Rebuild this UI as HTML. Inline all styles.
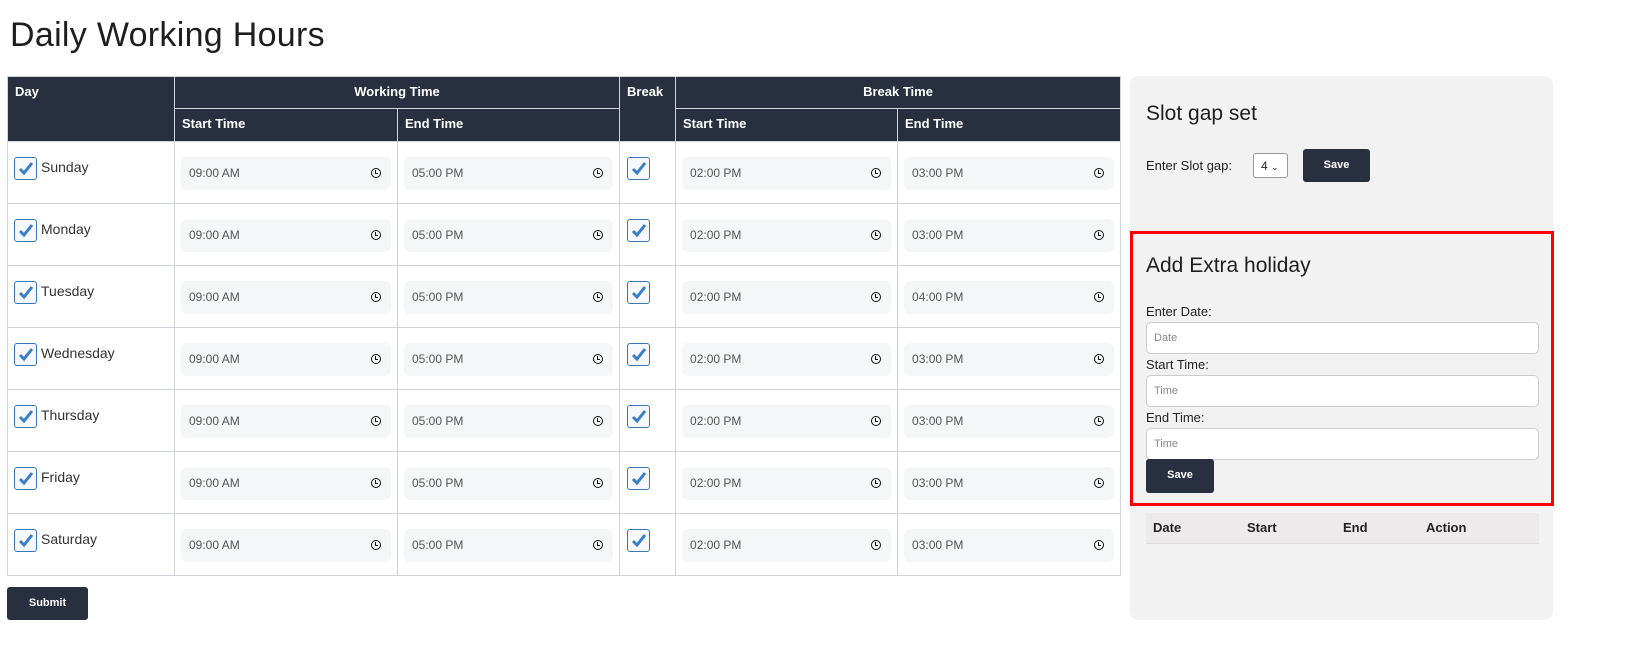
<!DOCTYPE html>
<html><head><meta charset="utf-8"><style>
*{box-sizing:border-box;margin:0;padding:0}
body{width:1633px;height:656px;background:#fff;font-family:"Liberation Sans",sans-serif;color:#222;position:relative;overflow:hidden}
h1{position:absolute;left:10px;top:16px;font-size:34px;font-weight:normal;color:#1e1e1e;letter-spacing:0.3px}
table{position:absolute;left:7px;top:76px;border-collapse:collapse;table-layout:fixed;width:1113px}
th{background:#282f3e;color:#fff;font-size:13px;font-weight:bold;border:1px solid #d0d3da;text-align:left;vertical-align:top;padding:7px 7px}
th.c{text-align:center}
td{border:1px solid #d0d3da;height:62px;vertical-align:top;padding:0;position:relative}
.cb{position:absolute;left:6px;top:15px;width:23px;height:23px;border:1.5px solid #3a77b5;border-radius:3px;background:#f6f8fb}
.cb svg{position:absolute;left:2px;top:2px}
.day{position:absolute;left:33px;top:17px;font-size:14px;color:#333}
.in{position:absolute;left:6px;right:6px;top:15px;height:33px;background:#f5f6f8;border-radius:6px;font-size:12px;color:#555;padding:9px 0 0 8px}
.in i{position:absolute;right:10px;top:11px;width:10px;height:10px;border:1.6px solid #111;border-radius:50%}
.in i:after{content:"";position:absolute;left:3px;top:1px;width:2px;height:3px;border-left:1.4px solid #111;border-bottom:1.4px solid #111}
.bc{left:7px}
.panel{position:absolute;left:1130px;top:76px;width:423px;height:544px;background:#f2f2f2;border-radius:8px}
.btn{position:absolute;background:#282f3e;color:#fff;font-size:11px;font-weight:bold;border-radius:3px;text-align:center}
.red{position:absolute;left:1130px;top:231px;width:424px;height:275px;border:3px solid #ff0000}
.lbl{position:absolute;font-size:13px;color:#222}
.fi{position:absolute;left:1146px;width:393px;height:32px;background:#fff;border:1px solid #ccc;border-radius:5px;font-size:11px;color:#888;padding:9px 0 0 7px}
</style></head><body>
<h1>Daily Working Hours</h1>
<table>
<colgroup><col style="width:167px"><col style="width:223px"><col style="width:222px"><col style="width:56px"><col style="width:222px"><col style="width:223px"></colgroup>
<tr style="height:32px"><th rowspan="2">Day</th><th colspan="2" class="c">Working Time</th><th rowspan="2">Break</th><th colspan="2" class="c">Break Time</th></tr>
<tr style="height:33px"><th>Start Time</th><th>End Time</th><th>Start Time</th><th>End Time</th></tr>
<tr><td><div class="cb"><svg width="17" height="17"><path d="M3 9l4 4 8-10" stroke="#3a7fc6" stroke-width="3" fill="none"/></svg></div><span class="day">Sunday</span></td><td><div class="in">09:00 AM<i></i></div></td><td><div class="in">05:00 PM<i></i></div></td><td><div class="cb bc"><svg width="17" height="17"><path d="M3 9l4 4 8-10" stroke="#3a7fc6" stroke-width="3" fill="none"/></svg></div></td><td><div class="in">02:00 PM<i></i></div></td><td><div class="in">03:00 PM<i></i></div></td></tr>
<tr><td><div class="cb"><svg width="17" height="17"><path d="M3 9l4 4 8-10" stroke="#3a7fc6" stroke-width="3" fill="none"/></svg></div><span class="day">Monday</span></td><td><div class="in">09:00 AM<i></i></div></td><td><div class="in">05:00 PM<i></i></div></td><td><div class="cb bc"><svg width="17" height="17"><path d="M3 9l4 4 8-10" stroke="#3a7fc6" stroke-width="3" fill="none"/></svg></div></td><td><div class="in">02:00 PM<i></i></div></td><td><div class="in">03:00 PM<i></i></div></td></tr>
<tr><td><div class="cb"><svg width="17" height="17"><path d="M3 9l4 4 8-10" stroke="#3a7fc6" stroke-width="3" fill="none"/></svg></div><span class="day">Tuesday</span></td><td><div class="in">09:00 AM<i></i></div></td><td><div class="in">05:00 PM<i></i></div></td><td><div class="cb bc"><svg width="17" height="17"><path d="M3 9l4 4 8-10" stroke="#3a7fc6" stroke-width="3" fill="none"/></svg></div></td><td><div class="in">02:00 PM<i></i></div></td><td><div class="in">04:00 PM<i></i></div></td></tr>
<tr><td><div class="cb"><svg width="17" height="17"><path d="M3 9l4 4 8-10" stroke="#3a7fc6" stroke-width="3" fill="none"/></svg></div><span class="day">Wednesday</span></td><td><div class="in">09:00 AM<i></i></div></td><td><div class="in">05:00 PM<i></i></div></td><td><div class="cb bc"><svg width="17" height="17"><path d="M3 9l4 4 8-10" stroke="#3a7fc6" stroke-width="3" fill="none"/></svg></div></td><td><div class="in">02:00 PM<i></i></div></td><td><div class="in">03:00 PM<i></i></div></td></tr>
<tr><td><div class="cb"><svg width="17" height="17"><path d="M3 9l4 4 8-10" stroke="#3a7fc6" stroke-width="3" fill="none"/></svg></div><span class="day">Thursday</span></td><td><div class="in">09:00 AM<i></i></div></td><td><div class="in">05:00 PM<i></i></div></td><td><div class="cb bc"><svg width="17" height="17"><path d="M3 9l4 4 8-10" stroke="#3a7fc6" stroke-width="3" fill="none"/></svg></div></td><td><div class="in">02:00 PM<i></i></div></td><td><div class="in">03:00 PM<i></i></div></td></tr>
<tr><td><div class="cb"><svg width="17" height="17"><path d="M3 9l4 4 8-10" stroke="#3a7fc6" stroke-width="3" fill="none"/></svg></div><span class="day">Friday</span></td><td><div class="in">09:00 AM<i></i></div></td><td><div class="in">05:00 PM<i></i></div></td><td><div class="cb bc"><svg width="17" height="17"><path d="M3 9l4 4 8-10" stroke="#3a7fc6" stroke-width="3" fill="none"/></svg></div></td><td><div class="in">02:00 PM<i></i></div></td><td><div class="in">03:00 PM<i></i></div></td></tr>
<tr><td><div class="cb"><svg width="17" height="17"><path d="M3 9l4 4 8-10" stroke="#3a7fc6" stroke-width="3" fill="none"/></svg></div><span class="day">Saturday</span></td><td><div class="in">09:00 AM<i></i></div></td><td><div class="in">05:00 PM<i></i></div></td><td><div class="cb bc"><svg width="17" height="17"><path d="M3 9l4 4 8-10" stroke="#3a7fc6" stroke-width="3" fill="none"/></svg></div></td><td><div class="in">02:00 PM<i></i></div></td><td><div class="in">03:00 PM<i></i></div></td></tr>
</table>
<div class="btn" style="left:7px;top:587px;width:81px;height:33px;padding-top:10px">Submit</div>

<div class="panel"></div>
<div class="lbl" style="left:1146px;top:102px;font-size:21px;color:#1e1e1e">Slot gap set</div>
<div class="lbl" style="left:1146px;top:158px">Enter Slot gap:</div>
<div style="position:absolute;left:1253px;top:153px;width:35px;height:25px;border:1px solid #999;border-radius:3px;background:#fff;font-size:12px;padding:5px 0 0 7px">4 <span style="font-size:9px">&#8964;</span></div>
<div class="btn" style="left:1303px;top:149px;width:67px;height:33px;padding-top:10px">Save</div>

<div class="red"></div>
<div class="lbl" style="left:1146px;top:254px;font-size:21px;color:#1e1e1e">Add Extra holiday</div>
<div class="lbl" style="left:1146px;top:304px">Enter Date:</div>
<div class="fi" style="top:322px">Date</div>
<div class="lbl" style="left:1146px;top:357px">Start Time:</div>
<div class="fi" style="top:375px">Time</div>
<div class="lbl" style="left:1146px;top:410px">End Time:</div>
<div class="fi" style="top:428px">Time</div>
<div class="btn" style="left:1146px;top:459px;width:68px;height:34px;padding-top:10px">Save</div>

<div style="position:absolute;left:1146px;top:513px;width:393px;height:31px;background:#eceaea;border-bottom:1px solid #ddd;font-size:13px;font-weight:bold;color:#222">
<span style="position:absolute;left:7px;top:7px">Date</span>
<span style="position:absolute;left:101px;top:7px">Start</span>
<span style="position:absolute;left:197px;top:7px">End</span>
<span style="position:absolute;left:280px;top:7px">Action</span>
</div>
</body></html>
